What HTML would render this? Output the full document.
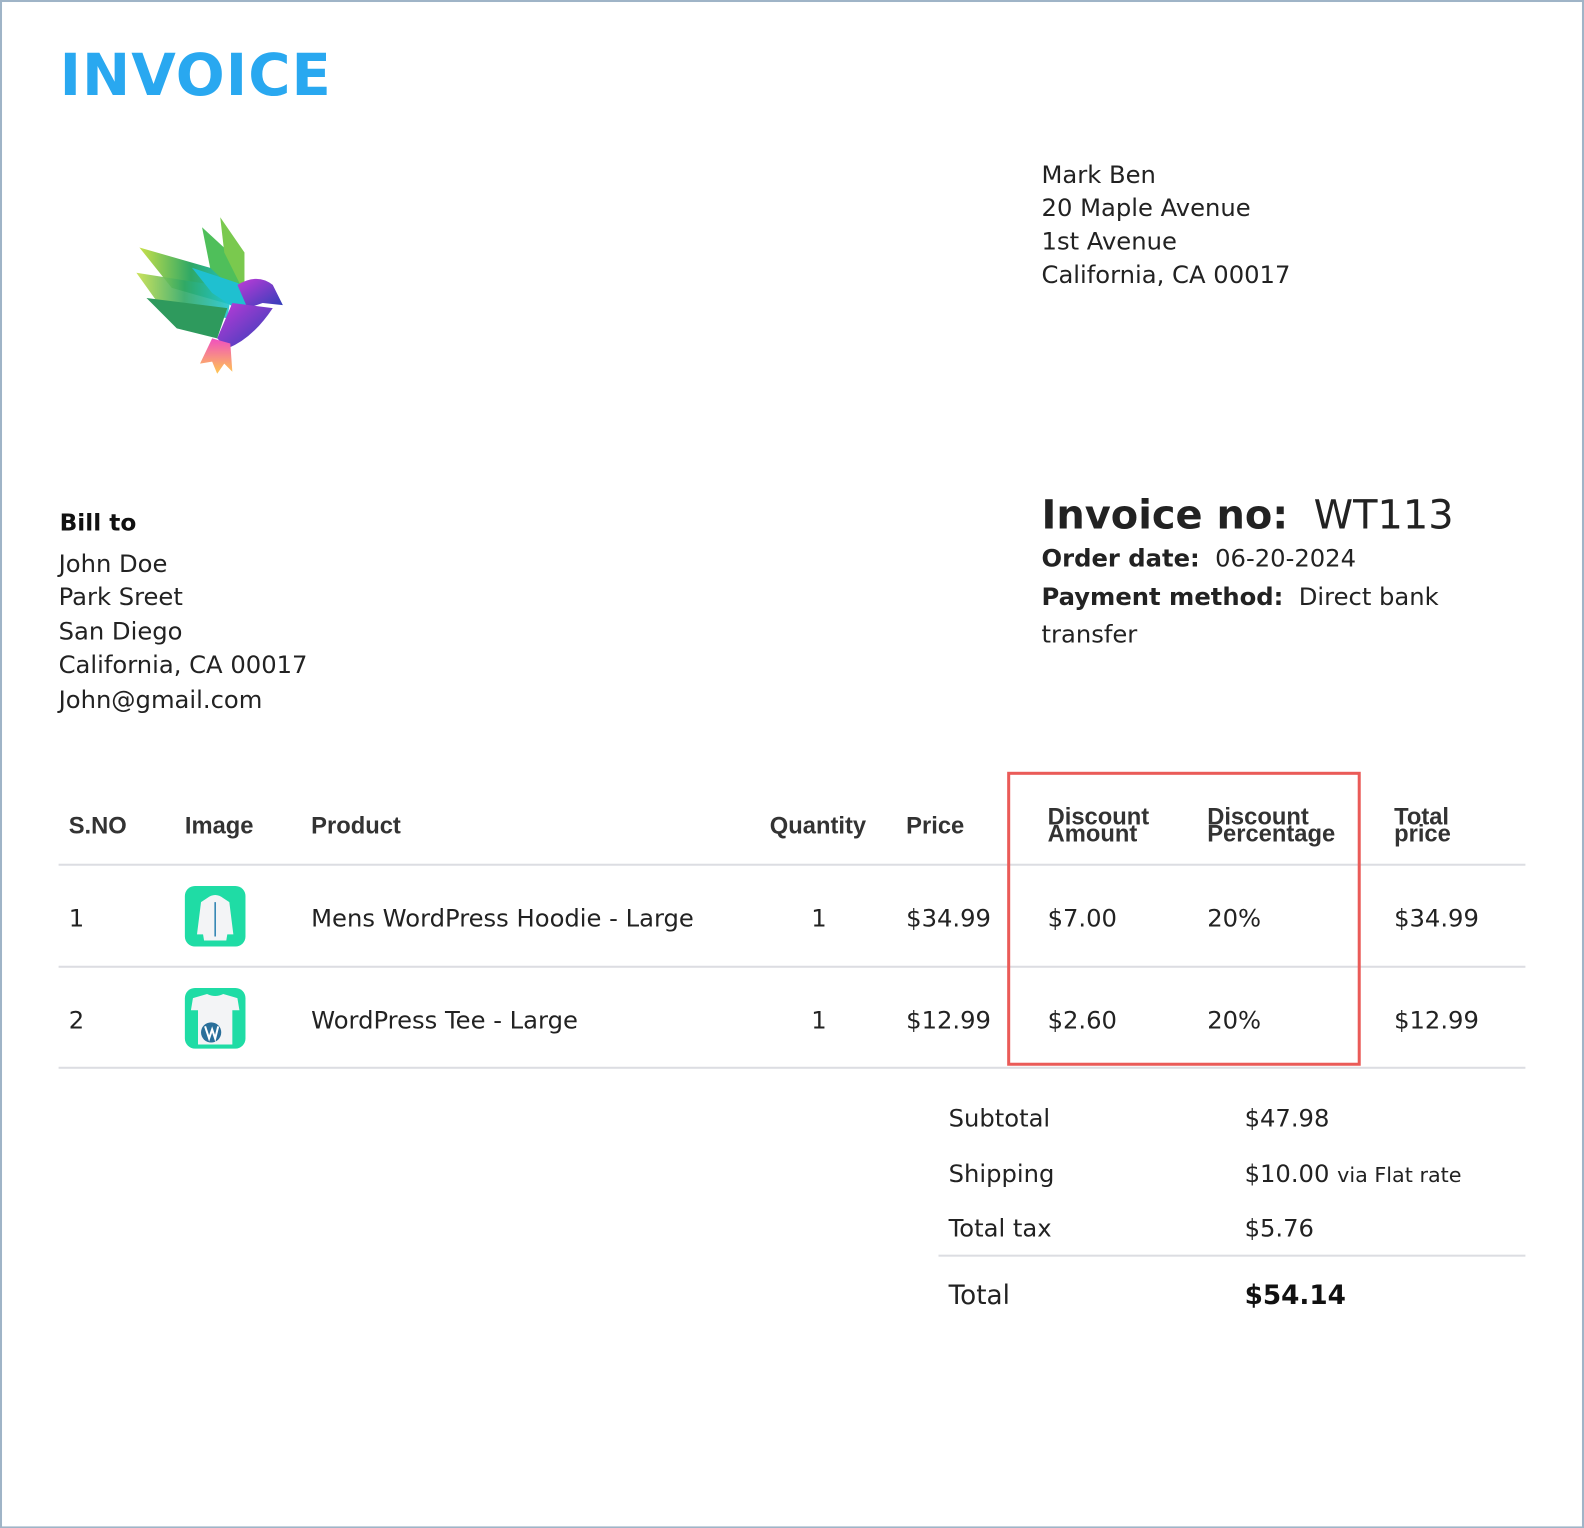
<!DOCTYPE html>
<html><head><meta charset="utf-8"><style>
html,body{margin:0;padding:0;background:#fff;}
body{width:1584px;height:1528px;overflow:hidden;position:relative;}
#w{position:absolute;left:0;top:0;width:1568px;height:1513px;transform:scale(1.0102);transform-origin:0 0;font-family:"DejaVu Sans","Liberation Sans",sans-serif;color:#222;}
#frame{position:absolute;left:0;top:0;width:1564px;height:1509px;border:2px solid #9fb4c7;}
.a{position:absolute;white-space:nowrap;}
.t{font-size:24px;}
.h{font-family:"Liberation Sans",Arial,sans-serif;font-weight:bold;font-size:23.5px;color:#333;}
.h2{font-family:"Liberation Sans",Arial,sans-serif;font-weight:bold;font-size:23.5px;color:#333;line-height:17px;}
.ln{position:absolute;height:2px;background:#dcdde2;}
.img{position:absolute;width:60px;height:60px;border-radius:10px;background:#1fdca5;}
</style></head><body><div id="w">
<div id="frame"></div>
<div class="a" style="left:59px;top:42px;font-size:57px;font-weight:bold;color:#29a8f0;letter-spacing:1px;">INVOICE</div>

<svg class="a" style="left:130px;top:210px" width="160" height="165" viewBox="0 0 160 165">
<defs>
<linearGradient id="g1" x1="0" y1="0" x2="1" y2="0"><stop offset="0" stop-color="#c8e04a"/><stop offset="0.5" stop-color="#2fa865"/><stop offset="1" stop-color="#1fc7d6"/></linearGradient>
<linearGradient id="g2" x1="0" y1="0" x2="1" y2="1"><stop offset="0" stop-color="#c03bd8"/><stop offset="1" stop-color="#2b3fb8"/></linearGradient>
<linearGradient id="g3" x1="0" y1="0" x2="0" y2="1"><stop offset="0" stop-color="#f04fc0"/><stop offset="1" stop-color="#ffc850"/></linearGradient>
</defs>
<path d="M8 35 L95 60 L110 95 L40 75 Z" fill="url(#g1)"/>
<path d="M5 60 L100 75 L95 105 L30 95 Z" fill="url(#g1)" opacity="0.9"/>
<path d="M15 85 L95 95 L85 125 L45 115 Z" fill="#2e9a5d"/>
<path d="M70 15 L108 50 L110 85 L78 55 Z" fill="#4fbf5a"/>
<path d="M88 5 L112 40 L112 80 L92 40 Z" fill="#7ac94e"/>
<path d="M60 55 L105 70 L130 85 L110 100 L80 80 Z" fill="#1fc0d0"/>
<path d="M105 72 Q125 60 140 72 L150 92 L130 90 L115 95 Z" fill="url(#g2)"/>
<path d="M100 90 L140 95 Q120 125 95 135 L85 125 Z" fill="url(#g2)"/>
<path d="M80 125 L98 130 L100 158 L92 150 L85 160 L80 148 L68 150 Z" fill="url(#g3)"/>
</svg>

<div class="a t" style="left:1031px;top:157px;line-height:33px;">Mark Ben<br>20 Maple Avenue<br>1st Avenue<br>California, CA 00017</div>

<div class="a" style="left:59px;top:505px;font-size:23px;font-weight:bold;color:#111;">Bill to</div>
<div class="a t" style="left:58px;top:542px;line-height:33.3px;">John Doe<br>Park Sreet<br>San Diego<br>California, CA 00017</div>
<div class="a t" style="left:58px;top:679px;">John@gmail.com</div>

<div class="a" style="left:1031px;top:487px;font-size:39.5px;"><b>Invoice no:</b>&nbsp; WT113</div>
<div class="a t" style="left:1031px;top:539px;"><b>Order date:</b>&nbsp; 06-20-2024</div>
<div class="a t" style="left:1031px;top:573px;line-height:37px;white-space:normal;width:420px;"><b>Payment method:</b>&nbsp; Direct bank transfer</div>

<div class="a h" style="left:68px;top:804px;">S.NO</div>
<div class="a h" style="left:183px;top:804px;">Image</div>
<div class="a h" style="left:308px;top:804px;">Product</div>
<div class="a h" style="left:762px;top:804px;">Quantity</div>
<div class="a h" style="left:897px;top:804px;">Price</div>
<div class="a h2" style="left:1037px;top:800px;">Discount<br>Amount</div>
<div class="a h2" style="left:1195px;top:800px;">Discount<br>Percentage</div>
<div class="a h2" style="left:1380px;top:800px;">Total<br>price</div>

<div class="ln" style="left:58px;top:855px;width:1452px;"></div>
<div class="ln" style="left:58px;top:956px;width:1452px;"></div>
<div class="ln" style="left:58px;top:1056px;width:1452px;"></div>

<div class="a t" style="left:68px;top:895px;">1</div>
<div class="img" style="left:183px;top:877px;"><svg width="60" height="60"><path d="M22 12 Q30 6 38 12 L44 16 L48 48 L42 48 L41 54 L19 54 L18 48 L12 48 L16 16 Z" fill="#f3f4f6"/><line x1="30" y1="16" x2="30" y2="50" stroke="#2a80b0" stroke-width="1.5"/></svg></div>
<div class="a t" style="left:308px;top:895px;">Mens WordPress Hoodie - Large</div>
<div class="a t" style="left:803px;top:895px;">1</div>
<div class="a t" style="left:897px;top:895px;">$34.99</div>
<div class="a t" style="left:1037px;top:895px;">$7.00</div>
<div class="a t" style="left:1195px;top:895px;">20%</div>
<div class="a t" style="left:1380px;top:895px;">$34.99</div>

<div class="a t" style="left:68px;top:996px;">2</div>
<div class="img" style="left:183px;top:978px;"><svg width="60" height="60"><path d="M8 10 L22 6 Q30 10 38 6 L52 10 L54 22 L47 22 L47 56 L13 56 L13 22 L6 22 Z" fill="#f3f4f6"/><circle cx="26" cy="44" r="10" fill="#2a6f9a"/><path d="M20 38 L24 50 L27 41 L30 50 L33 38" stroke="#fff" stroke-width="2" fill="none"/></svg></div>
<div class="a t" style="left:308px;top:996px;">WordPress Tee - Large</div>
<div class="a t" style="left:803px;top:996px;">1</div>
<div class="a t" style="left:897px;top:996px;">$12.99</div>
<div class="a t" style="left:1037px;top:996px;">$2.60</div>
<div class="a t" style="left:1195px;top:996px;">20%</div>
<div class="a t" style="left:1380px;top:996px;">$12.99</div>

<div class="a" style="left:997px;top:764px;width:344px;height:285px;border:3px solid #ea5b58;"></div>

<div class="a t" style="left:939px;top:1093px;">Subtotal</div>
<div class="a t" style="left:1232px;top:1093px;">$47.98</div>
<div class="a t" style="left:939px;top:1148px;">Shipping</div>
<div class="a t" style="left:1232px;top:1148px;">$10.00 <span style="font-size:20.5px;">via Flat rate</span></div>
<div class="a t" style="left:939px;top:1202px;">Total tax</div>
<div class="a t" style="left:1232px;top:1202px;">$5.76</div>
<div class="ln" style="left:929px;top:1242px;width:581px;"></div>
<div class="a" style="left:939px;top:1268px;font-size:26px;">Total</div>
<div class="a" style="left:1232px;top:1268px;font-size:26px;font-weight:bold;color:#111;">$54.14</div>
</div></body></html>
